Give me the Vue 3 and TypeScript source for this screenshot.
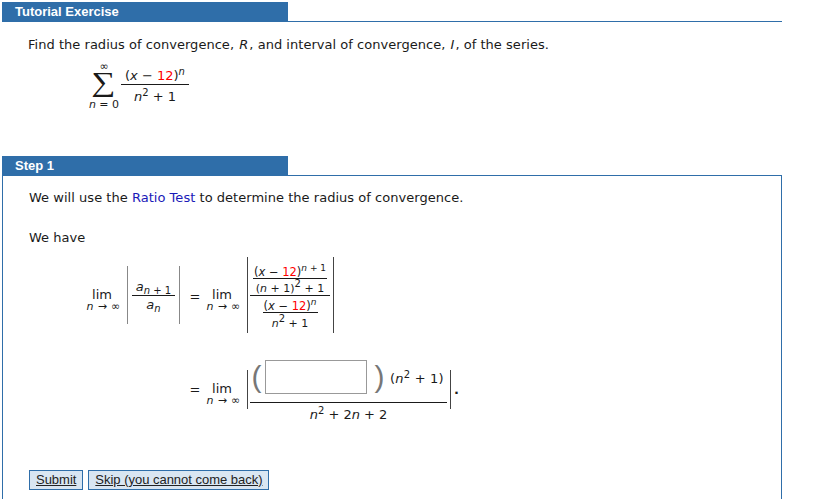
<script setup lang="ts">
const skip = "Skip (you cannot come back)";
</script>

<template>
  <div class="page">
    <section class="tutorial">
      <div class="head"><h2 class="title">Tutorial Exercise</h2></div>
      <div class="intro">
        <p class="text">Find the radius of convergence, <i>R</i>, and interval of convergence, <i>I</i>, of the series.</p>
        <div class="series">
          <div class="sum">
            <span class="small">∞</span>
            <span class="sigma">∑</span>
            <span class="small"><i>n</i> = 0</span>
          </div>
          <div class="frac top">
            <span class="num">(<i>x</i> − <b class="red">12</b>)<sup><i>n</i></sup></span>
            <span class="den"><i>n</i><sup>2</sup> + 1</span>
          </div>
        </div>
      </div>
    </section>

    <section class="step">
      <div class="head"><h2 class="title">Step 1</h2></div>
      <div class="box">
        <p class="text">We will use the <a class="link">Ratio Test</a> to determine the radius of convergence.</p>
        <p class="text have">We have</p>

        <div class="row first">
          <div class="lim"><span>lim</span><small><i>n</i> → ∞</small></div>
          <div class="abs short">
            <div class="frac ratio">
              <span class="num"><i>a</i><sub><i>n</i> + 1</sub></span>
              <span class="den"><i>a</i><sub><i>n</i></sub></span>
            </div>
          </div>
          <span class="eq">=</span>
          <div class="lim"><span>lim</span><small><i>n</i> → ∞</small></div>
          <div class="abs tall">
            <div class="frac outer">
              <div class="num">
                <div class="frac inner one">
                  <span class="num">(<i>x</i> − <b class="red">12</b>)<sup><i>n</i> + 1</sup></span>
                  <span class="den">(<i>n</i> + 1)<sup>2</sup> + 1</span>
                </div>
              </div>
              <div class="den">
                <div class="frac inner two">
                  <span class="num">(<i>x</i> − <b class="red">12</b>)<sup><i>n</i></sup></span>
                  <span class="den"><i>n</i><sup>2</sup> + 1</span>
                </div>
              </div>
            </div>
          </div>
        </div>

        <div class="row second">
          <span class="eq">=</span>
          <div class="lim"><span>lim</span><small><i>n</i> → ∞</small></div>
          <span class="bar bar-left"></span>
          <div class="frac big">
            <div class="num answer">
              <span class="paren">(</span>
              <input class="field" type="text" aria-label="answer" />
              <span class="paren close">)</span>
              <span class="rest">(<i>n</i><sup>2</sup> + 1)</span>
            </div>
            <span class="den"><i>n</i><sup>2</sup> + 2<i>n</i> + 2</span>
          </div>
          <span class="bar bar-right"></span>
          <span class="dot">.</span>
        </div>

        <div class="actions">
          <button class="btn" type="button">Submit</button>
          <button class="btn" type="button">{{ skip }}</button>
        </div>
      </div>
    </section>
  </div>
</template>

<style>
html, body { margin: 0; background: #fff; overflow: hidden; }
</style>

<style scoped>
.page {
  width: 780px;
  height: 499px;
  margin-left: 2px;
  padding-top: 2px;
  box-sizing: border-box;
  overflow: hidden;
  font: 13px/16px "DejaVu Sans", Verdana, sans-serif;
  color: #1a1a1a;
}
.head { border-bottom: 1px solid #2f6ea9; }
.title {
  width: 273px;
  height: 19px;
  margin: 0;
  padding-left: 13px;
  background: #2f6ea9;
  color: #fff;
  font: bold 13px/20px "Liberation Sans", Arial, sans-serif;
}
.tutorial { height: 154px; }
.intro { padding: 15px 0 0 26px; }
.text { margin: 0; white-space: nowrap; letter-spacing: .03px; }
.text i { padding: 0 1px; }
.series { display: flex; align-items: flex-start; margin: 9px 0 0 59px; }
.sum { display: flex; flex-direction: column; align-items: center; width: 34px; }
.small { font-size: 11px; line-height: 10px; white-space: nowrap; }
.sigma {
  font: 27px/20px "Liberation Serif", serif;
  height: 28px;
  transform: scaleX(1.25);
}
.frac { display: inline-flex; flex-direction: column; align-items: stretch; text-align: center; }
.frac > .num { display: block; padding: 0 2px 1px; border-bottom: 1px solid #1a1a1a; white-space: nowrap; }
.frac > .den { display: block; padding: 1px 2px 0; white-space: nowrap; }
.top { margin-top: 6px; width: 68px; }
.top > .num { padding-bottom: 0; }
.top > .den { padding-top: 4px; }
.red { color: #f00; font-weight: 400; }
sup, sub { font-size: 10px; line-height: 0; }
sup { vertical-align: 5px; }
sub { vertical-align: -3px; }
.box {
  height: 330px;
  border: 1px solid #2f6ea9;
  border-top: 0;
  padding: 14px 0 0 26px;
}
.link { color: #1a1ab8; }
.have { margin-top: 24px; }
.row { display: flex; }
.first { margin: 11px 0 0 55px; height: 76px; align-items: center; }
.second { margin: 27px 0 0 157px; align-items: flex-start; }
.lim { display: flex; flex-direction: column; align-items: center; width: 36px; line-height: 13px; }
.first .lim { margin-top: 10px; }
.second .lim { margin-top: 22px; }
.lim small { font-size: 11px; line-height: 11px; white-space: nowrap; letter-spacing: .3px; margin-left: 3px; }
.eq { width: 18px; text-align: center; margin-left: 6px; }
.first .eq { margin-top: 4px; }
.second .eq { margin-left: 0; margin-top: 22px; }
.abs { border-left: 1px solid #888; border-right: 1px solid #888; display: flex; align-items: center; margin-left: 7px; }
.short { height: 58px; width: 51px; justify-content: center; }
.ratio { width: 43px; }
.ratio > .num { padding: 2px 0 0; }
.ratio > .den { padding-top: 1px; }
.tall { height: 76px; width: 85px; border-color: #444; align-items: flex-start; }
.outer { width: 80px; margin-left: 2px; }
.outer > .num { height: 39px; box-sizing: border-box; padding: 0; }
.outer > .den { padding: 0; }
.inner { display: flex; margin: 0 auto; }
.inner > .num, .inner > .den { font-size: 11px; line-height: 12px; padding-left: 0; padding-right: 0; white-space: nowrap; }
.inner > .num { font-size: 11.5px; padding-bottom: 0; }
.inner sup { font-size: 9px; }
.inner > .den sup { font-size: 10px; }
.one { width: 74px; }
.one > .num { padding-top: 9px; }
.one > .den { padding-top: 4px; }
.two { width: 55px; }
.two > .num { padding-top: 4px; }
.two > .den { padding-top: 5px; }
.bar { width: 1px; height: 39px; margin-top: 10px; background: #444; }
.bar-left { margin-left: 7px; }
.bar-right { margin-left: 3px; }
.big { width: 197px; margin-left: 2px; }
.big > .answer { display: flex; align-items: flex-start; height: 43px; box-sizing: border-box; padding: 0; }
.big > .den { padding-top: 4px; }
.paren { width: 13px; font: 30px/34px "Liberation Sans", Arial, sans-serif; color: #777; text-align: center; }
.close { margin-left: 6px; }
.field {
  width: 102px;
  height: 34px;
  box-sizing: border-box;
  margin: 0 0 0 2px;
  border: 1px solid #999;
  padding: 0;
  background: #fff;
}
.rest { margin: 11px 0 0 4px; letter-spacing: .2px; }
.dot { margin: 22px 0 0 3px; font-weight: 700; }
.actions { display: flex; gap: 5px; margin-top: 47px; }
.btn {
  height: 20px;
  padding: 0 6px;
  border: 1px solid #2f6ea9;
  border-radius: 0;
  background: #d9e6f2;
  color: #222;
  font: 13px/18px "Liberation Sans", Arial, sans-serif;
  letter-spacing: -.02px;
  text-decoration: underline;
}
</style>
